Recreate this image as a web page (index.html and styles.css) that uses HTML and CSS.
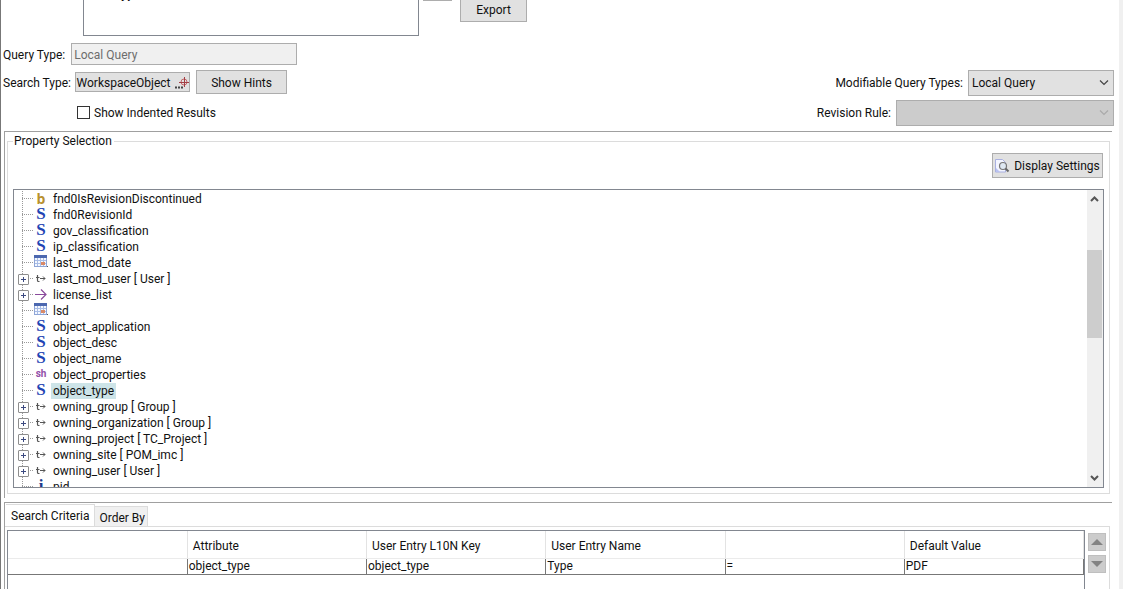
FILE: index.html
```html
<!DOCTYPE html>
<html lang="en">
<head>
    <meta charset="UTF-8">
    <meta name="viewport" content="width=device-width, initial-scale=1.0">
    <title>Query Builder</title>
    <link rel="stylesheet" href="styles.css">
</head>
<body>
    <!-- Shared icons -->
    <svg class="sprite" aria-hidden="true">
        <symbol id="icon-date" viewBox="0 0 14 13">
            <rect x="0.5" y="0.5" width="12" height="11" fill="#f4f8ff" stroke="#8fa5d6"/>
            <rect x="0" y="0" width="13" height="3" fill="#4c68b0"/>
            <path d="M1 5.5h11M1 8.5h11M3.5 3v8M6.5 3v8M9.5 3v8" stroke="#a9bde6" fill="none"/>
            <rect x="7" y="7" width="4" height="3" fill="#d98a68"/>
            <rect x="13" y="11" width="1" height="1" fill="#555"/>
        </symbol>
        <symbol id="icon-ref" viewBox="0 0 10 8">
            <path d="M1.5 0v5.500q0 1 1 1h1M0 2.500h3.500" fill="none" stroke="#555" stroke-width="1.200"/>
            <path d="M4 3.500h5M7 1.500l2 2-2 2" fill="none" stroke="#555"/>
        </symbol>
        <symbol id="icon-list" viewBox="0 0 12 11">
            <path d="M0 5.500h11M6 0.500l5 5-5 5" fill="none" stroke="#8a4a9c" stroke-width="1.200"/>
        </symbol>
        <symbol id="icon-down" viewBox="0 0 10 6">
            <path d="M1 0.500l4 4 4-4" fill="none" stroke="currentColor" stroke-width="1.200"/>
        </symbol>
    </svg>

    <main class="page">
        <div class="top">
            <div class="list-box">Item Type</div>
            <button class="btn cut" type="button" aria-label="Add"></button>
            <button class="btn export" type="button">Export</button>
        </div>

        <form class="query-form">
            <div class="form-left">
                <div class="row">
                    <label for="queryType">Query Type:</label>
                    <input type="text" id="queryType" class="query-type" value="Local Query" disabled>
                </div>
                <div class="row">
                    <label for="searchType">Search Type:</label>
                    <button type="button" id="searchType" class="btn search-type">WorkspaceObject
                        <svg width="14" height="12" viewBox="0 0 14 12">
                            <path d="M0 10.500h8" stroke="#444" stroke-width="2" stroke-dasharray="2 1"/>
                            <circle cx="9" cy="5" r="3" fill="none" stroke="#c4686b"/>
                            <path d="M4 5.500h10M9.500 0v10" stroke="#a33f45"/>
                        </svg>
                    </button>
                    <button type="button" class="btn hints">Show Hints</button>
                </div>
                <div class="row check-row">
                    <input type="checkbox" id="indented">
                    <label for="indented">Show Indented Results</label>
                </div>
            </div>
            <div class="form-right">
                <div class="row">
                    <label for="modTypes">Modifiable Query Types:</label>
                    <span class="select">
                        <select id="modTypes">
                            <option selected>Local Query</option>
                        </select>
                        <svg width="10" height="6"><use href="#icon-down"/></svg>
                    </span>
                </div>
                <div class="row">
                    <label for="revRule">Revision Rule:</label>
                    <span class="select wide">
                        <select id="revRule" disabled></select>
                        <svg width="10" height="6"><use href="#icon-down"/></svg>
                    </span>
                </div>
            </div>
        </form>

        <section class="panel">
            <fieldset class="group">
                <legend>Property Selection</legend>
                <div class="toolbar">
                    <button type="button" class="btn display">
                        <svg width="15" height="14" viewBox="0 0 15 14">
                            <path d="M0.500 0.500h7l3 3v9.500h-10z" fill="#f3f5ff" stroke="#a9b0e0"/>
                            <path d="M1 9l4 4H1z" fill="#b9c2f2"/>
                            <circle cx="8" cy="7" r="3.500" fill="#dfe8f2" stroke="#777" stroke-width="1.200"/>
                            <path d="M10.500 9.500l3 3" stroke="#666" stroke-width="2"/>
                        </svg>
                        Display Settings
                    </button>
                </div>
                <div class="tree-box">
                    <ul class="tree">
                        <li><i class="ico bool">b</i><span>fnd0IsRevisionDiscontinued</span></li>
                        <li><i class="ico str">S</i><span>fnd0RevisionId</span></li>
                        <li><i class="ico str">S</i><span>gov_classification</span></li>
                        <li><i class="ico str">S</i><span>ip_classification</span></li>
                        <li><i class="ico date"><svg width="14" height="13"><use href="#icon-date"/></svg></i><span>last_mod_date</span></li>
                        <li class="branch"><i class="ico"><svg width="10" height="8"><use href="#icon-ref"/></svg></i><span>last_mod_user [ User ]</span></li>
                        <li class="branch"><i class="ico"><svg width="12" height="11"><use href="#icon-list"/></svg></i><span>license_list</span></li>
                        <li><i class="ico date"><svg width="14" height="13"><use href="#icon-date"/></svg></i><span>lsd</span></li>
                        <li><i class="ico str">S</i><span>object_application</span></li>
                        <li><i class="ico str">S</i><span>object_desc</span></li>
                        <li><i class="ico str">S</i><span>object_name</span></li>
                        <li><i class="ico short">sh</i><span>object_properties</span></li>
                        <li><i class="ico str">S</i><span class="selected">object_type</span></li>
                        <li class="branch"><i class="ico"><svg width="10" height="8"><use href="#icon-ref"/></svg></i><span>owning_group [ Group ]</span></li>
                        <li class="branch"><i class="ico"><svg width="10" height="8"><use href="#icon-ref"/></svg></i><span>owning_organization [ Group ]</span></li>
                        <li class="branch"><i class="ico"><svg width="10" height="8"><use href="#icon-ref"/></svg></i><span>owning_project [ TC_Project ]</span></li>
                        <li class="branch"><i class="ico"><svg width="10" height="8"><use href="#icon-ref"/></svg></i><span>owning_site [ POM_imc ]</span></li>
                        <li class="branch"><i class="ico"><svg width="10" height="8"><use href="#icon-ref"/></svg></i><span>owning_user [ User ]</span></li>
                        <li><i class="ico int">i</i><span>pid</span></li>
                    </ul>
                    <div class="scrollbar">
                        <svg width="9" height="6" viewBox="0 0 9 6"><path d="M1 5l3.500-3.500L8 5" fill="none" stroke="#555" stroke-width="2"/></svg>
                        <div class="thumb"></div>
                        <svg width="9" height="6" viewBox="0 0 9 6"><path d="M1 1l3.500 3.500L8 1" fill="none" stroke="#555" stroke-width="2"/></svg>
                    </div>
                </div>
            </fieldset>
        </section>

        <section class="criteria">
            <div class="tabs">
                <button type="button" class="tab active">Search Criteria</button>
                <button type="button" class="tab">Order By</button>
            </div>
            <div class="tab-body">
                <div class="table-box">
                    <table>
                        <thead>
                            <tr>
                                <th></th>
                                <th>Attribute</th>
                                <th>User Entry L10N Key</th>
                                <th>User Entry Name</th>
                                <th></th>
                                <th>Default Value</th>
                            </tr>
                        </thead>
                        <tbody>
                            <tr>
                                <td></td>
                                <td>object_type</td>
                                <td>object_type</td>
                                <td>Type</td>
                                <td>=</td>
                                <td>PDF</td>
                            </tr>
                        </tbody>
                    </table>
                </div>
                <div class="movers">
                    <button type="button" aria-label="Move up"><svg width="12" height="6" viewBox="0 0 12 6"><path d="M0 6l6-6 6 6z" fill="#838383"/></svg></button>
                    <button type="button" aria-label="Move down"><svg width="12" height="6" viewBox="0 0 12 6"><path d="M0 0h12l-6 6z" fill="#838383"/></svg></button>
                </div>
            </div>
        </section>
    </main>
</body>
</html>
```

FILE: styles.css
```css
* {
    box-sizing: border-box;
}
body {
    margin: 0;
    background: #fff;
    color: #111;
    overflow: hidden;
}
body, button, input, select {
    font-family: Roboto, "Open Sans", sans-serif;
    font-size: 12px;
    line-height: 16px;
}
.sprite {
    display: none;
}
.page {
    display: flex;
    flex-direction: column;
    height: 100vh;
    border-left: 1px solid #777;
    border-right: 4px solid #f0f0f0;
}
.btn {
    display: flex;
    align-items: center;
    justify-content: center;
    padding: 0;
    color: #111;
    background: #e1e1e1;
    border: 1px solid #adadad;
    white-space: nowrap;
}
.btn svg {
    flex-shrink: 0;
}

/* Upper area, scrolled out of view */
.top {
    display: flex;
    align-items: flex-end;
    height: 36px;
    padding-left: 82px;
    overflow: hidden;
    flex-shrink: 0;
}
.list-box {
    width: 336px;
    height: 51px;
    padding-left: 3px;
    border: 1px solid #828790;
    font-weight: bold;
}
.cut {
    width: 29px;
    height: 24px;
    margin: 0 8px 35px 4px;
}
.export {
    width: 67px;
    height: 26px;
    padding-top: 1px;
    margin-bottom: 14px;
}

/* Query form */
.query-form {
    display: flex;
    justify-content: space-between;
    padding: 7px 5px 0 2px;
    height: 95px;
    flex-shrink: 0;
}
.row {
    display: flex;
    align-items: center;
}
.form-left .row {
    height: 22px;
    margin-bottom: 6px;
    gap: 6px;
}
.form-left label {
    padding-top: 2px;
}
.query-type {
    width: 226px;
    height: 22px;
    padding: 2px 2px 0;
    color: #6d6d6d;
    background: #f0f0f0;
    border: 1px solid #adadad;
}
.search-type {
    width: 115px;
    height: 20px;
    gap: 4px;
    padding-top: 1px;
    margin-left: -2px;
}
.hints {
    width: 91px;
    height: 24px;
    padding-top: 2px;
}
.form-left .check-row {
    gap: 4px;
    padding: 4px 0 0 74px;
}
.check-row input {
    appearance: none;
    width: 13px;
    height: 13px;
    margin: 0;
    background: #fff;
    border: 1px solid #333;
}
.form-right {
    display: flex;
    flex-direction: column;
    align-items: flex-end;
    gap: 4px;
    padding-top: 27px;
}
.form-right .row {
    gap: 5px;
}
.select {
    position: relative;
    display: flex;
    width: 146px;
    height: 26px;
}
.select.wide {
    width: 218px;
}
.select select {
    appearance: none;
    width: 100%;
    padding: 0 3px;
    color: #111;
    background: #e1e1e1;
    border: 1px solid #adadad;
    border-radius: 0;
}
.select select:disabled {
    background: #ccc;
    opacity: 1;
}
.select svg {
    position: absolute;
    right: 5px;
    top: 10px;
    color: #444;
}
.select select:disabled + svg {
    color: #aaa;
}

/* Property tree */
.panel {
    margin: 0 7px 0 3px;
    padding: 2px 2px 4px;
    border-top: 1px solid #a0a0a0;
    border-left: 1px solid #a0a0a0;
    flex-shrink: 0;
}
.group {
    min-width: 0;
    margin: 0;
    padding: 5px;
    border: 1px solid #dcdcdc;
}
.group legend {
    padding: 0 2px 0 1px;
    line-height: 14px;
}
.toolbar {
    display: flex;
    justify-content: flex-end;
    margin: 0 1px 11px 0;
}
.display {
    width: 111px;
    height: 25px;
    gap: 4px;
}
.tree-box {
    display: flex;
    height: 299px;
    border: 1px solid #828790;
    overflow: hidden;
}
.tree {
    flex: 1;
    margin: 0;
    padding: 1px 0 0 8px;
    list-style: none;
}
.tree li {
    position: relative;
    display: flex;
    align-items: center;
    height: 16px;
}
/* dotted connector lines */
.tree li::before {
    content: "";
    width: 12px;
    height: 16px;
    background:
        repeating-linear-gradient(90deg, #999 0 1px, transparent 1px 2px) 0 7px / 12px 1px no-repeat,
        repeating-linear-gradient(#999 0 1px, transparent 1px 2px) 0 0 / 1px 16px no-repeat;
}
.tree .branch::after {
    content: "";
    position: absolute;
    left: -4px;
    top: 3px;
    width: 9px;
    height: 9px;
    border: 1px solid #8e8e8e;
    border-radius: 1px;
    background:
        linear-gradient(#3c4a80, #3c4a80) center / 5px 1px no-repeat,
        linear-gradient(#3c4a80, #3c4a80) center / 1px 5px no-repeat,
        #fff;
}
.ico {
    display: flex;
    justify-content: center;
    align-items: center;
    width: 14px;
    height: 16px;
    font-style: normal;
    font-weight: bold;
}
.ico.str {
    padding-bottom: 2px;
    color: #1f45b4;
    font: bold 17px/14px "Liberation Serif", serif;
}
.ico.bool {
    color: #b8902f;
    font: bold 14px/16px "Open Sans", sans-serif;
}
.ico.int {
    padding-bottom: 2px;
    color: #1b3a8c;
    font: bold 17px/14px "Liberation Serif", serif;
}
.ico.short {
    padding-bottom: 2px;
    color: #9250a8;
    font-size: 10px;
}
.ico.date {
    justify-content: flex-start;
    padding-bottom: 3px;
}
.branch .ico {
    padding-bottom: 1px;
}
.tree span {
    padding: 0 2px;
    margin-left: 3px;
}
.tree .selected {
    background: #cde4e8;
}
.scrollbar {
    display: flex;
    flex-direction: column;
    align-items: center;
    justify-content: space-between;
    width: 16px;
    padding: 6px 1px 6px 0;
    background: #f0f0f0;
}
.thumb {
    width: 15px;
    height: 88px;
    margin-bottom: 90px;
    background: #cdcdcd;
}

/* Search criteria */
.criteria {
    display: flex;
    flex-direction: column;
    flex: 1;
    margin: 4px 7px 0 3px;
    border-top: 1px solid #a0a0a0;
    border-left: 1px solid #a0a0a0;
}
.tabs {
    display: flex;
    align-items: flex-end;
    padding: 1px 0 0 1px;
}
.tab {
    height: 20px;
    padding: 2px 2px 0 4px;
    color: #111;
    background: #f0f0f0;
    border: 1px solid #dcdcdc;
    border-width: 1px 1px 0 0;
}
.tab.active {
    height: 22px;
    padding: 0 5px;
    background: #fff;
}
.tab-body {
    display: flex;
    flex: 1;
    gap: 3px;
    margin-right: 2px;
    padding: 3px 3px 0 2px;
    border: 1px solid #dcdcdc;
    border-width: 1px 1px 0 0;
}
.table-box {
    flex: 1;
    border: 1px solid #828790;
    border-bottom: 0;
}
table {
    width: 100%;
    table-layout: fixed;
    border-collapse: collapse;
}
th, td {
    text-align: left;
    font-weight: normal;
}
th {
    height: 27px;
    padding: 4px 5px 0;
    border-right: 1px solid #e3e3e3;
    border-bottom: 1px solid #ebebeb;
}
td {
    height: 16px;
    padding: 0 1px;
    line-height: 14px;
    border-right: 1px solid #777;
    border-bottom: 1px solid #777;
}
.movers {
    display: flex;
    flex-direction: column;
    gap: 4px;
    padding-top: 3px;
}
.movers button {
    display: flex;
    align-items: center;
    justify-content: center;
    width: 18px;
    height: 18px;
    padding: 0;
    background: #ccc;
    border: 1px solid #bfbfbf;
}
```
